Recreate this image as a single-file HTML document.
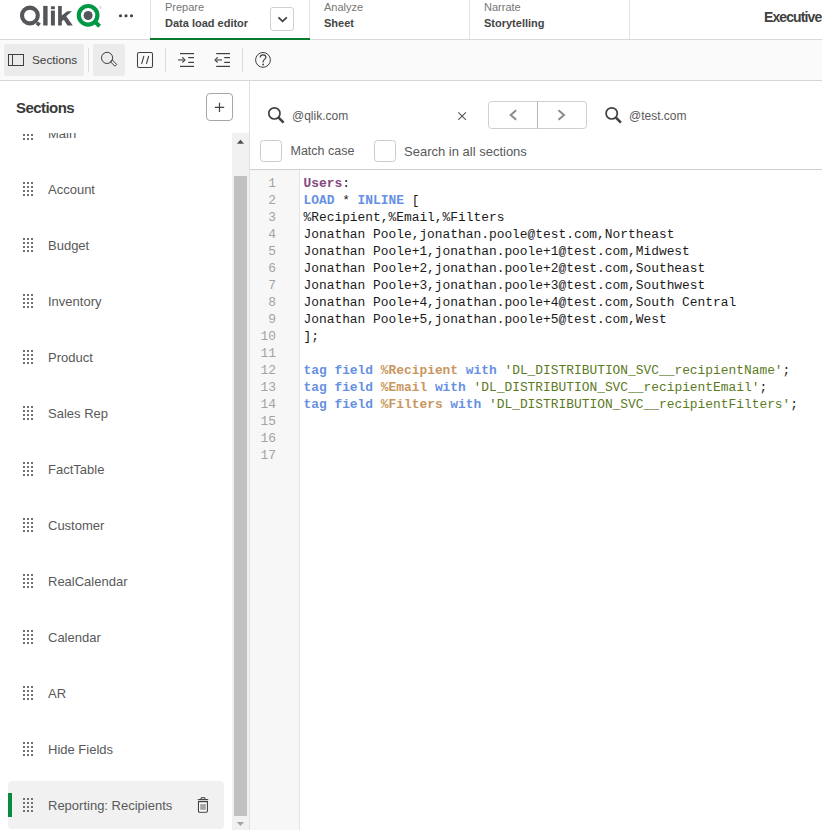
<!DOCTYPE html>
<html><head><meta charset="utf-8">
<style>
*{box-sizing:border-box;margin:0;padding:0}
html,body{width:822px;height:830px;overflow:hidden;background:#fff;font-family:"Liberation Sans",sans-serif;color:#404040}
.abs{position:absolute}
#top{position:absolute;left:0;top:0;width:822px;height:40px;background:#fff;border-bottom:1px solid #d9d9d9}
.tab{position:absolute;top:0;height:39px;border-right:1px solid #e3e3e3}
.tab .l1{position:absolute;left:14px;top:1px;font-size:11px;color:#767676}
.tab .l2{position:absolute;left:14px;top:17px;font-size:11px;font-weight:700;color:#454545}
#tb{position:absolute;left:0;top:40px;width:822px;height:41px;background:#fafafa;border-bottom:1px solid #d6d6d6}
.btn{position:absolute;top:4px;height:32px;border-radius:3px}
.sep{position:absolute;top:8px;width:1px;height:24px;background:#dcdcdc}
#left{position:absolute;left:0;top:81px;width:250px;height:749px;background:#fff;border-right:1px solid #e0e0e0}
.item{position:absolute;left:0;width:232px;height:56px}
.item .dots{position:absolute;left:23px;top:21px}
.item .t{position:absolute;left:48px;top:21px;font-size:13px;color:#595959;white-space:nowrap}
.selbg{position:absolute;left:8px;top:4px;width:216px;height:48px;border-radius:4px;background:#f1f1f1}
.bar{position:absolute;left:8px;top:16px;width:4px;height:24px;background:#0a8a3c}
#code{position:absolute;left:250px;top:170px;width:572px;height:660px;background:#fff}
#gut{position:absolute;left:0;top:0;width:50px;height:660px;background:#f7f7f7;border-right:1px solid #e3e3e3}
#nums{position:absolute;right:23px;top:5px;text-align:right;font-family:"Liberation Mono",monospace;font-size:12.88px;line-height:17px;color:#a3a3a3;white-space:pre}
#lines{position:absolute;left:53.5px;top:5px;font-family:"Liberation Mono",monospace;font-size:12.88px;line-height:17px;color:#1a1a1a;white-space:pre}
.kw{color:#6690e3;font-weight:700}
.lb{color:#84497f;font-weight:700}
.fd{color:#c99660;font-weight:700}
.st{color:#5c7a1e}
</style></head><body>
<div id="top">
  <svg class="abs" style="left:18px;top:3px" width="88" height="27" viewBox="0 0 88 27">
    <g fill="#54565a">
      <circle cx="11.9" cy="12.5" r="7.9" fill="none" stroke="#54565a" stroke-width="4.1"/>
      <path d="M19.6,18.4 L22.9,20.4 L20.5,23.4 L17.7,21.3 Z"/>
      <rect x="25.2" y="2.9" width="4.4" height="19.6"/>
      <rect x="32.9" y="3.2" width="4" height="3" rx="0.6"/>
      <rect x="32.9" y="7.6" width="4" height="14.9"/>
      <path d="M40.1,3.1 H43.8 V12.5 L49.2,8.2 H54 L48.2,13.3 L54.8,22.5 H49.5 L45.8,16.8 L43.8,18.3 V22.5 H40.1 Z"/>
    </g>
    <circle cx="70.1" cy="12.3" r="9.3" fill="none" stroke="#009845" stroke-width="4.2"/>
    <circle cx="70.1" cy="12.55" r="4.5" fill="#54565a"/>
    <path d="M76.2,18 L81.6,23.3" stroke="#009845" stroke-width="4"/>
    <circle cx="82.3" cy="4.3" r="1" fill="none" stroke="#bbb" stroke-width="0.5"/>
  </svg>
  <svg class="abs" style="left:118px;top:13px" width="16" height="6"><circle cx="2.5" cy="2.8" r="1.55" fill="#404040"/><circle cx="8" cy="2.8" r="1.55" fill="#404040"/><circle cx="13.5" cy="2.8" r="1.55" fill="#404040"/></svg>
  <div class="tab" style="left:150px;width:160px;border-left:1px solid #e3e3e3">
    <div class="l1">Prepare</div><div class="l2">Data load editor</div>
    <div class="abs" style="left:119px;top:7px;width:24px;height:24px;border:1px solid #d0d0d0;border-radius:3px;background:#fff">
      <svg class="abs" style="left:6px;top:8px" width="12" height="8"><path d="M1.4,1.3 L5.6,5.4 L9.8,1.3" fill="none" stroke="#404040" stroke-width="1.7"/></svg>
    </div>
    <div class="abs" style="left:-1px;top:38px;width:160px;height:2px;background:#077a30"></div>
  </div>
  <div class="tab" style="left:310px;width:160px">
    <div class="l1">Analyze</div><div class="l2">Sheet</div>
  </div>
  <div class="tab" style="left:470px;width:160px">
    <div class="l1">Narrate</div><div class="l2">Storytelling</div>
  </div>
  <div class="abs" style="left:764px;top:9px;font-size:14px;letter-spacing:-0.9px;font-weight:700;color:#404040;white-space:nowrap">Executive</div>
</div>

<div id="tb">
  <div class="btn" style="left:4px;width:80px;background:#ebebeb"></div>
  <div class="btn" style="left:93px;width:32px;background:#ebebeb"></div>
  <div class="sep" style="left:88px"></div>
  <div class="sep" style="left:165px"></div>
  <div class="sep" style="left:242px"></div>
  <svg class="abs" style="left:0;top:0" width="300" height="40" viewBox="0 40 300 40">
    <g fill="none" stroke="#404040" stroke-width="1">
      <rect x="8.5" y="54.5" width="15" height="11"/>
      <line x1="12.5" y1="54.5" x2="12.5" y2="65.5"/>
      <circle cx="107.1" cy="57.9" r="5.6"/>
      <path d="M110.3,61.6 L112.1,59.8 L116.7,64.4 L114.9,66.2 Z"/>
      <rect x="137.5" y="52.5" width="15" height="15" rx="1.6" stroke-width="1.05"/>
      <line x1="141.6" y1="63.8" x2="143.9" y2="56" stroke-width="1.1"/>
      <line x1="146.4" y1="63.8" x2="148.7" y2="56" stroke-width="1.1"/>
      <circle cx="263" cy="59.9" r="7.4"/>
      <path d="M260.2,57.4 C260.2,55.8 261.4,54.8 263,54.8 C264.7,54.8 265.9,55.8 265.9,57.3 C265.9,59.3 263.1,59.5 263.1,61.8 L263.1,62.4" stroke-width="1.2"/>
    </g>
    <circle cx="263.1" cy="64.5" r="0.9" fill="#404040"/>
    <g stroke="#404040" stroke-width="1.2">
      <line x1="180" y1="53.6" x2="194" y2="53.6"/>
      <line x1="188.2" y1="57.6" x2="194" y2="57.6"/>
      <line x1="188.2" y1="62.4" x2="194" y2="62.4"/>
      <line x1="180" y1="66.4" x2="194" y2="66.4"/>
      <line x1="216.2" y1="53.6" x2="230" y2="53.6"/>
      <line x1="224.2" y1="57.6" x2="230" y2="57.6"/>
      <line x1="224.2" y1="62.4" x2="230" y2="62.4"/>
      <line x1="216.2" y1="66.4" x2="230" y2="66.4"/>
    </g>
    <line x1="178" y1="59.9" x2="184" y2="59.9" stroke="#8a8a8a" stroke-width="1.8"/>
    <path d="M182.3,57.3 L185,59.9 L182.3,62.5" fill="none" stroke="#505050" stroke-width="1.2"/>
    <line x1="216" y1="59.9" x2="222" y2="59.9" stroke="#8a8a8a" stroke-width="1.8"/>
    <path d="M217.7,57.3 L215,59.9 L217.7,62.5" fill="none" stroke="#505050" stroke-width="1.2"/>
  </svg>
  <div class="abs" style="left:32px;top:12.5px;font-size:11.8px;color:#404040">Sections</div>
</div>

<div id="left">
  <div class="abs" style="left:16px;top:18px;font-size:15px;letter-spacing:-0.55px;font-weight:700;color:#3a3a3a">Sections</div>
  <div class="abs" style="left:206px;top:12px;width:27px;height:28px;border:1px solid #a6a6a6;border-radius:4px;background:#fff">
    <svg class="abs" style="left:-1px;top:-1px" width="27" height="28"><path d="M8.8,14.4 H18.2 M13.5,9.7 V19.1" stroke="#404040" stroke-width="1.2"/></svg>
    
  </div>
  <div id="list" class="abs" style="left:0;top:52px;width:232px;height:697px;overflow:hidden">
<div class="item" style="top:-28px"><svg class="dots" width="10" height="14"><path d="M0 0h2v2h-2zM4 0h2v2h-2zM8 0h2v2h-2zM0 4h2v2h-2zM4 4h2v2h-2zM8 4h2v2h-2zM0 8h2v2h-2zM4 8h2v2h-2zM8 8h2v2h-2zM0 12h2v2h-2zM4 12h2v2h-2zM8 12h2v2h-2z" fill="#707070"/></svg><div class="t">Main</div></div>
<div class="item" style="top:28px"><svg class="dots" width="10" height="14"><path d="M0 0h2v2h-2zM4 0h2v2h-2zM8 0h2v2h-2zM0 4h2v2h-2zM4 4h2v2h-2zM8 4h2v2h-2zM0 8h2v2h-2zM4 8h2v2h-2zM8 8h2v2h-2zM0 12h2v2h-2zM4 12h2v2h-2zM8 12h2v2h-2z" fill="#707070"/></svg><div class="t">Account</div></div>
<div class="item" style="top:84px"><svg class="dots" width="10" height="14"><path d="M0 0h2v2h-2zM4 0h2v2h-2zM8 0h2v2h-2zM0 4h2v2h-2zM4 4h2v2h-2zM8 4h2v2h-2zM0 8h2v2h-2zM4 8h2v2h-2zM8 8h2v2h-2zM0 12h2v2h-2zM4 12h2v2h-2zM8 12h2v2h-2z" fill="#707070"/></svg><div class="t">Budget</div></div>
<div class="item" style="top:140px"><svg class="dots" width="10" height="14"><path d="M0 0h2v2h-2zM4 0h2v2h-2zM8 0h2v2h-2zM0 4h2v2h-2zM4 4h2v2h-2zM8 4h2v2h-2zM0 8h2v2h-2zM4 8h2v2h-2zM8 8h2v2h-2zM0 12h2v2h-2zM4 12h2v2h-2zM8 12h2v2h-2z" fill="#707070"/></svg><div class="t">Inventory</div></div>
<div class="item" style="top:196px"><svg class="dots" width="10" height="14"><path d="M0 0h2v2h-2zM4 0h2v2h-2zM8 0h2v2h-2zM0 4h2v2h-2zM4 4h2v2h-2zM8 4h2v2h-2zM0 8h2v2h-2zM4 8h2v2h-2zM8 8h2v2h-2zM0 12h2v2h-2zM4 12h2v2h-2zM8 12h2v2h-2z" fill="#707070"/></svg><div class="t">Product</div></div>
<div class="item" style="top:252px"><svg class="dots" width="10" height="14"><path d="M0 0h2v2h-2zM4 0h2v2h-2zM8 0h2v2h-2zM0 4h2v2h-2zM4 4h2v2h-2zM8 4h2v2h-2zM0 8h2v2h-2zM4 8h2v2h-2zM8 8h2v2h-2zM0 12h2v2h-2zM4 12h2v2h-2zM8 12h2v2h-2z" fill="#707070"/></svg><div class="t">Sales Rep</div></div>
<div class="item" style="top:308px"><svg class="dots" width="10" height="14"><path d="M0 0h2v2h-2zM4 0h2v2h-2zM8 0h2v2h-2zM0 4h2v2h-2zM4 4h2v2h-2zM8 4h2v2h-2zM0 8h2v2h-2zM4 8h2v2h-2zM8 8h2v2h-2zM0 12h2v2h-2zM4 12h2v2h-2zM8 12h2v2h-2z" fill="#707070"/></svg><div class="t">FactTable</div></div>
<div class="item" style="top:364px"><svg class="dots" width="10" height="14"><path d="M0 0h2v2h-2zM4 0h2v2h-2zM8 0h2v2h-2zM0 4h2v2h-2zM4 4h2v2h-2zM8 4h2v2h-2zM0 8h2v2h-2zM4 8h2v2h-2zM8 8h2v2h-2zM0 12h2v2h-2zM4 12h2v2h-2zM8 12h2v2h-2z" fill="#707070"/></svg><div class="t">Customer</div></div>
<div class="item" style="top:420px"><svg class="dots" width="10" height="14"><path d="M0 0h2v2h-2zM4 0h2v2h-2zM8 0h2v2h-2zM0 4h2v2h-2zM4 4h2v2h-2zM8 4h2v2h-2zM0 8h2v2h-2zM4 8h2v2h-2zM8 8h2v2h-2zM0 12h2v2h-2zM4 12h2v2h-2zM8 12h2v2h-2z" fill="#707070"/></svg><div class="t">RealCalendar</div></div>
<div class="item" style="top:476px"><svg class="dots" width="10" height="14"><path d="M0 0h2v2h-2zM4 0h2v2h-2zM8 0h2v2h-2zM0 4h2v2h-2zM4 4h2v2h-2zM8 4h2v2h-2zM0 8h2v2h-2zM4 8h2v2h-2zM8 8h2v2h-2zM0 12h2v2h-2zM4 12h2v2h-2zM8 12h2v2h-2z" fill="#707070"/></svg><div class="t">Calendar</div></div>
<div class="item" style="top:532px"><svg class="dots" width="10" height="14"><path d="M0 0h2v2h-2zM4 0h2v2h-2zM8 0h2v2h-2zM0 4h2v2h-2zM4 4h2v2h-2zM8 4h2v2h-2zM0 8h2v2h-2zM4 8h2v2h-2zM8 8h2v2h-2zM0 12h2v2h-2zM4 12h2v2h-2zM8 12h2v2h-2z" fill="#707070"/></svg><div class="t">AR</div></div>
<div class="item" style="top:588px"><svg class="dots" width="10" height="14"><path d="M0 0h2v2h-2zM4 0h2v2h-2zM8 0h2v2h-2zM0 4h2v2h-2zM4 4h2v2h-2zM8 4h2v2h-2zM0 8h2v2h-2zM4 8h2v2h-2zM8 8h2v2h-2zM0 12h2v2h-2zM4 12h2v2h-2zM8 12h2v2h-2z" fill="#707070"/></svg><div class="t">Hide Fields</div></div>
<div class="item sel" style="top:644px"><div class="selbg"></div><div class="bar"></div><svg class="dots" width="10" height="14"><path d="M0 0h2v2h-2zM4 0h2v2h-2zM8 0h2v2h-2zM0 4h2v2h-2zM4 4h2v2h-2zM8 4h2v2h-2zM0 8h2v2h-2zM4 8h2v2h-2zM8 8h2v2h-2zM0 12h2v2h-2zM4 12h2v2h-2zM8 12h2v2h-2z" fill="#707070"/></svg><div class="t">Reporting: Recipients</div><svg class="abs" style="left:196px;top:20px" width="14" height="17" viewBox="0 0 14 17"><path d="M4.7,2.4 L5.4,0.8 L8.6,0.8 L9.3,2.4" fill="none" stroke="#404040" stroke-width="1.1"/><line x1="1.8" y1="2.6" x2="12.2" y2="2.6" stroke="#404040" stroke-width="1.1"/><path d="M2.5,4.6 H11.4 V14.1 Q11.4,15.3 10.2,15.3 H3.7 Q2.5,15.3 2.5,14.1 Z" fill="#fff" stroke="#404040" stroke-width="1.1"/><rect x="4.2" y="7" width="5.6" height="5.9" fill="#a6a6a6"/></svg></div>
</div>
  <!-- scrollbar -->
  <div class="abs" style="left:232px;top:52px;width:17px;height:697px;background:#f1f1f1">
    <div class="abs" style="left:2px;top:43px;width:13px;height:640px;background:#c1c1c1"></div>
    <svg class="abs" style="left:0;top:0" width="17" height="697"><path d="M4.8,10.7 L8.5,6.7 L12,10.7 Z" fill="#505050"/><path d="M4.8,689 L12,689 L8.4,693 Z" fill="#a3a3a3"/></svg>
  </div>
</div>

<div id="search" class="abs" style="left:250px;top:81px;width:572px;height:89px;background:#fff;border-bottom:1px solid #d0d0d0">
  <svg class="abs" style="left:0;top:0" width="572" height="88" viewBox="250 81 572 88">
    <g fill="none" stroke="#404040" stroke-width="1.7">
      <circle cx="274.4" cy="113.4" r="5.6"/>
      <circle cx="611.7" cy="113.4" r="5.6"/>
    </g>
    <g stroke="#404040" stroke-width="2.6" stroke-linecap="butt">
      <line x1="278.6" y1="117.6" x2="283.6" y2="122.6"/>
      <line x1="615.9" y1="117.6" x2="620.9" y2="122.6"/>
    </g>
    <g stroke="#555" stroke-width="1.1">
      <line x1="458.3" y1="112.3" x2="465.9" y2="119.9"/>
      <line x1="465.9" y1="112.3" x2="458.3" y2="119.9"/>
    </g>
    <rect x="488.5" y="101.5" width="98" height="27" rx="3" fill="none" stroke="#cfcfcf"/>
    <line x1="537.5" y1="101.5" x2="537.5" y2="128.5" stroke="#b5b5b5"/>
    <g fill="none" stroke="#8c8c8c" stroke-width="2">
      <path d="M516.2,110.2 L510.7,115 L516.2,119.8"/>
      <path d="M558.5,110.2 L564,115 L558.5,119.8"/>
    </g>
    <rect x="260.5" y="140.5" width="21" height="21" rx="3" fill="none" stroke="#cccccc"/>
    <rect x="374.5" y="140.5" width="21" height="21" rx="3" fill="none" stroke="#cccccc"/>
  </svg>
  <div class="abs" style="left:42px;top:27.5px;font-size:12px;color:#595959">@qlik.com</div>
  <div class="abs" style="left:379px;top:27.5px;font-size:12px;color:#595959">@test.com</div>
  <div class="abs" style="left:40.5px;top:63px;font-size:12.5px;color:#595959">Match case</div>
  <div class="abs" style="left:154px;top:63px;font-size:13px;color:#595959">Search in all sections</div>
</div>
<div id="code">
  <div id="gut"><div id="nums">1
2
3
4
5
6
7
8
9
10
11
12
13
14
15
16
17</div></div>
  <div id="lines"><span class="lb">Users</span>:
<span class="kw">LOAD</span> * <span class="kw">INLINE</span> [
%Recipient,%Email,%Filters
Jonathan Poole,jonathan.poole@test.com,Northeast
Jonathan Poole+1,jonathan.poole+1@test.com,Midwest
Jonathan Poole+2,jonathan.poole+2@test.com,Southeast
Jonathan Poole+3,jonathan.poole+3@test.com,Southwest
Jonathan Poole+4,jonathan.poole+4@test.com,South Central
Jonathan Poole+5,jonathan.poole+5@test.com,West
];

<span class="kw">tag</span> <span class="kw">field</span> <span class="fd">%Recipient</span> <span class="kw">with</span> <span class="st">'DL_DISTRIBUTION_SVC__recipientName'</span>;
<span class="kw">tag</span> <span class="kw">field</span> <span class="fd">%Email</span> <span class="kw">with</span> <span class="st">'DL_DISTRIBUTION_SVC__recipientEmail'</span>;
<span class="kw">tag</span> <span class="kw">field</span> <span class="fd">%Filters</span> <span class="kw">with</span> <span class="st">'DL_DISTRIBUTION_SVC__recipientFilters'</span>;


</div>
</div>
</body></html>
